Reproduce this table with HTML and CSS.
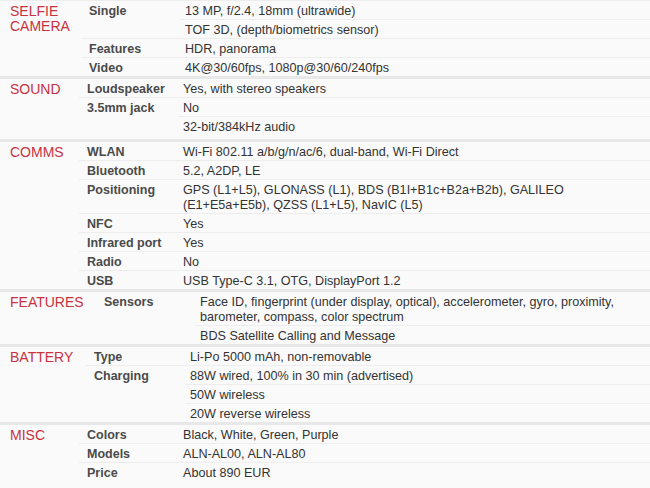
FILE: index.html
```html
<!DOCTYPE html>
<html>
<head>
<meta charset="utf-8">
<link rel="stylesheet" href="styles.css">
</head>
<body>
<div class="specs">
  <section class="sec sec-selfie">
    <h2 class="head">SELFIE CAMERA</h2>
    <div class="rows">
      <div class="row"><span class="ttl">Single</span><span class="nfo">13 MP, f/2.4, 18mm (ultrawide)</span></div>
      <div class="row"><span class="ttl"></span><span class="nfo">TOF 3D, (depth/biometrics sensor)</span></div>
      <div class="row"><span class="ttl">Features</span><span class="nfo">HDR, panorama</span></div>
      <div class="row"><span class="ttl">Video</span><span class="nfo">4K@30/60fps, 1080p@30/60/240fps</span></div>
    </div>
  </section>
  <section class="sec sec-sound">
    <h2 class="head">SOUND</h2>
    <div class="rows">
      <div class="row"><span class="ttl">Loudspeaker</span><span class="nfo">Yes, with stereo speakers</span></div>
      <div class="row"><span class="ttl">3.5mm jack</span><span class="nfo">No</span></div>
      <div class="row"><span class="ttl"></span><span class="nfo">32-bit/384kHz audio</span></div>
    </div>
  </section>
  <section class="sec sec-comms">
    <h2 class="head">COMMS</h2>
    <div class="rows">
      <div class="row"><span class="ttl">WLAN</span><span class="nfo">Wi-Fi 802.11 a/b/g/n/ac/6, dual-band, Wi-Fi Direct</span></div>
      <div class="row"><span class="ttl">Bluetooth</span><span class="nfo">5.2, A2DP, LE</span></div>
      <div class="row"><span class="ttl">Positioning</span><span class="nfo">GPS (L1+L5), GLONASS (L1), BDS (B1I+B1c+B2a+B2b), GALILEO (E1+E5a+E5b), QZSS (L1+L5), NavIC (L5)</span></div>
      <div class="row"><span class="ttl">NFC</span><span class="nfo">Yes</span></div>
      <div class="row"><span class="ttl">Infrared port</span><span class="nfo">Yes</span></div>
      <div class="row"><span class="ttl">Radio</span><span class="nfo">No</span></div>
      <div class="row"><span class="ttl">USB</span><span class="nfo">USB Type-C 3.1, OTG, DisplayPort 1.2</span></div>
    </div>
  </section>
  <section class="sec sec-features">
    <h2 class="head">FEATURES</h2>
    <div class="rows">
      <div class="row"><span class="ttl">Sensors</span><span class="nfo">Face ID, fingerprint (under display, optical), accelerometer, gyro, proximity, barometer, compass, color spectrum</span></div>
      <div class="row"><span class="ttl"></span><span class="nfo">BDS Satellite Calling and Message</span></div>
    </div>
  </section>
  <section class="sec sec-battery">
    <h2 class="head">BATTERY</h2>
    <div class="rows">
      <div class="row"><span class="ttl">Type</span><span class="nfo">Li-Po 5000 mAh, non-removable</span></div>
      <div class="row"><span class="ttl">Charging</span><span class="nfo">88W wired, 100% in 30 min (advertised)</span></div>
      <div class="row"><span class="ttl"></span><span class="nfo">50W wireless</span></div>
      <div class="row"><span class="ttl"></span><span class="nfo">20W reverse wireless</span></div>
    </div>
  </section>
  <section class="sec sec-misc">
    <h2 class="head">MISC</h2>
    <div class="rows">
      <div class="row"><span class="ttl">Colors</span><span class="nfo">Black, White, Green, Purple</span></div>
      <div class="row"><span class="ttl">Models</span><span class="nfo">ALN-AL00, ALN-AL80</span></div>
      <div class="row"><span class="ttl">Price</span><span class="nfo">About 890 EUR</span></div>
    </div>
  </section>
</div>
</body>
</html>
```

FILE: styles.css
```css
html, body {
  margin: 0;
  padding: 0;
  background: #fafafa;
}
body {
  font-family: "Liberation Sans", Arial, sans-serif;
  font-size: 12.6px;
  color: #333;
}
.specs {
  width: 650px;
}
.sec {
  display: flex;
  border-top: 3px solid #e8e8e8;
}
.sec:first-child {
  border-top: 1px solid #ededed;
}
.head {
  flex: none;
  width: 80px;
  box-sizing: border-box;
  margin: 0;
  padding: 3px 0 0 10px;
  font-size: 14px;
  font-weight: normal;
  line-height: 15px;
  color: #c8323e;
}
.sec-selfie .head { width: 81px; }
.sec-sound .head { width: 79px; }
.sec-comms .head { width: 79px; }
.sec-features .head { width: 96px; }
.sec-battery .head { width: 86px; }
.sec-misc .head { width: 79px; }
.rows {
  flex: 1;
  display: flex;
  flex-direction: column;
}
.sec-sound .rows {
  padding-bottom: 4px;
}
.row {
  display: flex;
}
.ttl, .nfo {
  padding-top: 3px;
  padding-bottom: 0;
  line-height: 15px;
}
.row + .row .ttl:not(:empty),
.row + .row .nfo {
  border-top: 1px solid #ededed;
}
.row + .row .ttl:empty {
  border-top: 1px solid transparent;
}
.ttl {
  flex: none;
  width: 99px;
  box-sizing: border-box;
  padding-left: 8px;
  font-weight: bold;
  font-size: 12.5px;
  color: #4a4a4a;
}
.nfo {
  flex: 1;
  padding-left: 5px;
  padding-right: 20px;
  color: #333;
}
```
